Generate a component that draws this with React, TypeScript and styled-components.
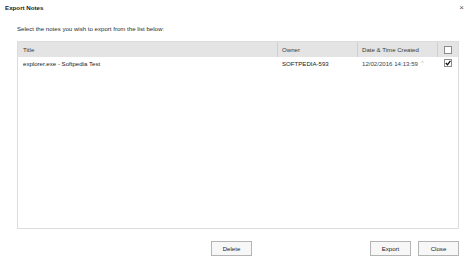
import React from "react";
import styled, { createGlobalStyle } from "styled-components";

const GlobalStyle = createGlobalStyle`
  html, body {
    margin: 0;
    padding: 0;
    background: #ffffff;
  }
  body {
    font-family: "Liberation Sans", "DejaVu Sans", sans-serif;
    font-size: 6.1px;
    color: #2b2b2b;
  }
`;

const Window = styled.div`
  width: 474px;
  height: 271px;
  display: flex;
  flex-direction: column;
  background: #ffffff;
  overflow: hidden;
`;

const TitleBar = styled.div`
  height: 15px;
  display: flex;
  align-items: center;
  justify-content: space-between;
  padding: 0 10px 0 5px;
`;

const Title = styled.span`
  font-weight: bold;
  font-size: 6.2px;
  color: #1a1a1a;
`;

const CloseX = styled.span`
  font-size: 8px;
  color: #555;
`;

const Body = styled.div`
  padding: 0 15px 0 17px;
  display: flex;
  flex-direction: column;
`;

const Prompt = styled.div`
  margin-top: 8px;
  height: 11px;
  line-height: 11px;
`;

const Table = styled.div`
  margin-top: 7px;
  height: 186px;
  border: 1px solid #dcdcdc;
  display: flex;
  flex-direction: column;
`;

const Row = styled.div<{ $header?: boolean }>`
  display: grid;
  grid-template-columns: 259px 80px 80px 1fr;
  height: ${(p) => (p.$header ? "15px" : "12px")};
  background: ${(p) => (p.$header ? "#e4e4e4" : "#ffffff")};
  color: ${(p) => (p.$header ? "#3a3a3a" : "#222")};
`;

const Cell = styled.div<{ $divider?: boolean; $center?: boolean }>`
  display: flex;
  align-items: center;
  justify-content: ${(p) => (p.$center ? "center" : "flex-start")};
  padding-left: ${(p) => (p.$center ? "0" : "4px")};
  border-left: ${(p) => (p.$divider ? "1px solid #cfcfcf" : "1px solid transparent")};
  white-space: nowrap;
  overflow: hidden;
`;

const DateText = styled.span`
  color: #444;
`;

const SortMark = styled.span`
  color: #bbb;
  margin-left: 3px;
  font-size: 6px;
`;

const Box = styled.span`
  width: 6px;
  height: 6px;
  border: 1px solid #8a8a8a;
  background: #fff;
  display: flex;
  align-items: center;
  justify-content: center;
`;

const Footer = styled.div`
  margin-top: 12px;
  display: flex;
  align-items: center;
  padding-left: 194px;
  gap: 7px;
`;

const Spacer = styled.div`
  flex: 1;
`;

const Button = styled.button`
  width: 41px;
  height: 15px;
  padding: 0;
  border: 1px solid #b4b4b4;
  background: #f7f7f7;
  font-family: inherit;
  font-size: 6.1px;
  color: #222;
`;

const Check = () => (
  <svg width="6" height="6" viewBox="0 0 6 6">
    <path d="M0.8 3 L2.5 4.8 L5.4 0.8" stroke="#111" strokeWidth="1.3" fill="none" />
  </svg>
);

export default function App() {
  return (
    <>
      <GlobalStyle />
      <Window>
        <TitleBar>
          <Title>Export Notes</Title>
          <CloseX>×</CloseX>
        </TitleBar>
        <Body>
          <Prompt>Select the notes you wish to export from the list below:</Prompt>
          <Table>
            <Row $header>
              <Cell>Title</Cell>
              <Cell $divider>Owner</Cell>
              <Cell $divider>Date &amp; Time Created</Cell>
              <Cell $divider $center>
                <Box />
              </Cell>
            </Row>
            <Row>
              <Cell>explorer.exe - Softpedia Test</Cell>
              <Cell>SOFTPEDIA-593</Cell>
              <Cell>
                <DateText>12/02/2016 14:13:59</DateText>
                <SortMark>^</SortMark>
              </Cell>
              <Cell $center>
                <Box>
                  <Check />
                </Box>
              </Cell>
            </Row>
          </Table>
          <Footer>
            <Button>Delete</Button>
            <Spacer />
            <Button>Export</Button>
            <Button>Close</Button>
          </Footer>
        </Body>
      </Window>
    </>
  );
}
